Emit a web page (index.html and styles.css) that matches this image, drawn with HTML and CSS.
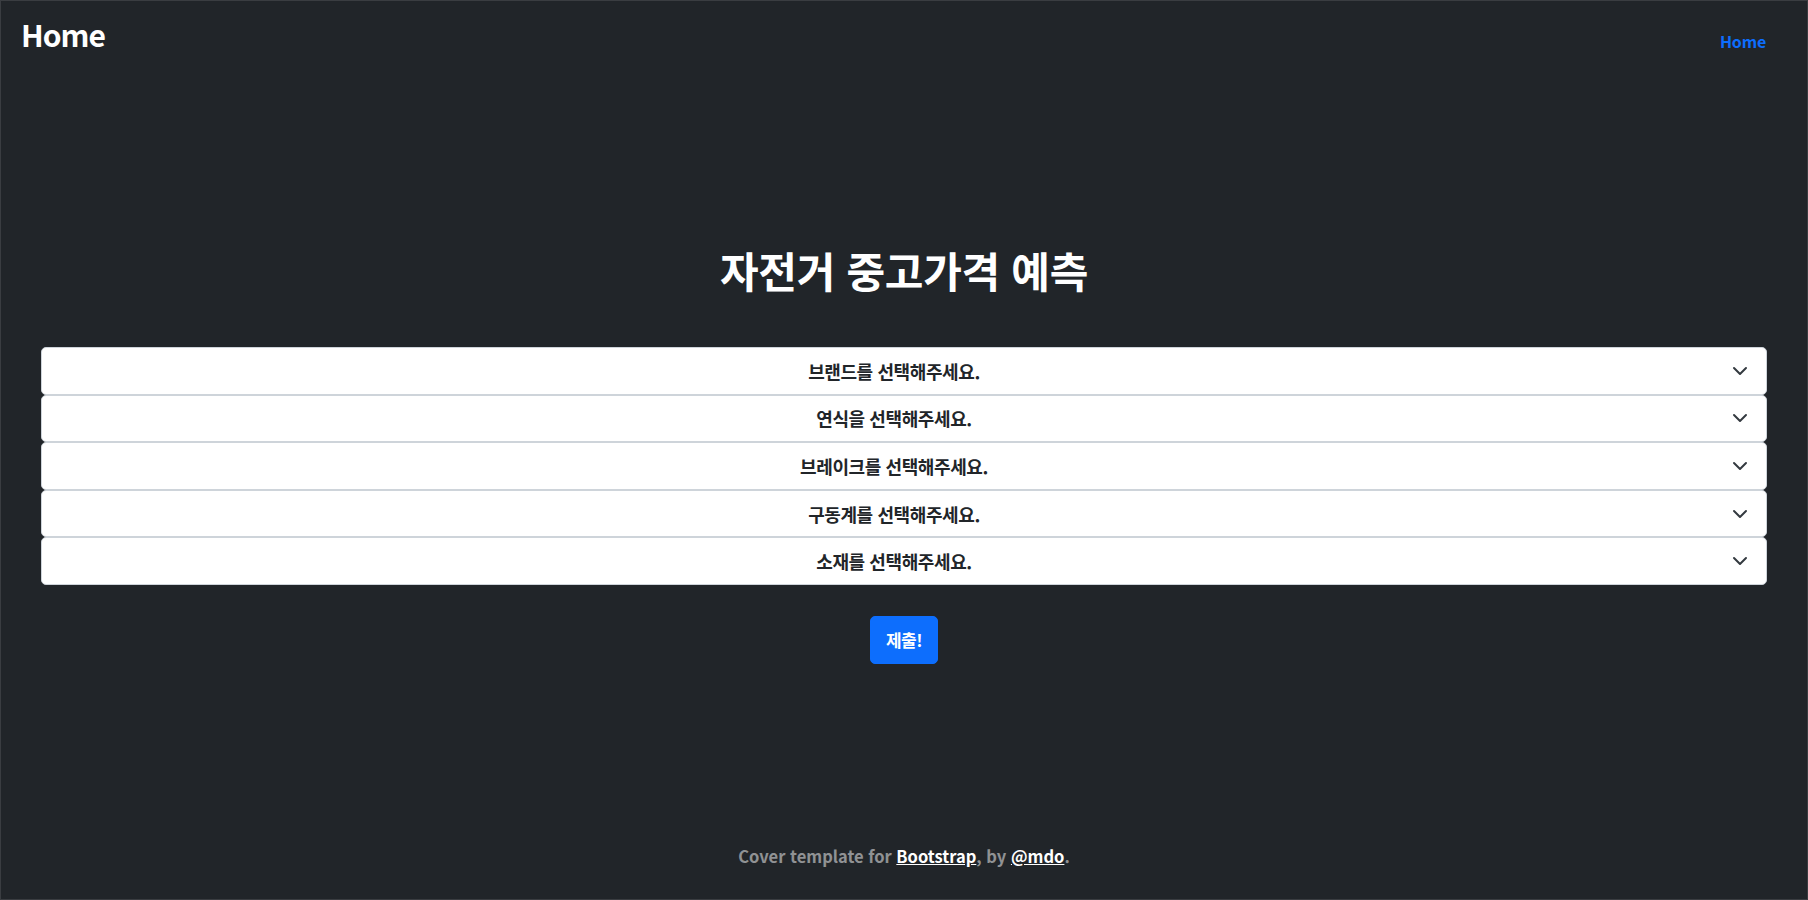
FILE: index.html
```html
<!DOCTYPE html>
<html lang="ko">
<head>
<meta charset="utf-8">
<title>자전거 중고가격 예측</title>
<link rel="stylesheet" href="styles.css">
</head>
<body>
<div class="cover">
  <header class="top">
    <h3 class="brand">Home</h3>
    <nav class="nav"><a class="nav-link" href="#">Home</a></nav>
  </header>
  <main class="main">
    <h1 class="title">자전거 중고가격 예측</h1>
    <form class="form">
      <div class="selects">
        <div class="select"><span>브랜드를 선택해주세요.</span><svg class="chev" viewBox="0 0 16 16"><path d="M2 5l6 6 6-6"/></svg></div>
        <div class="select"><span>연식을 선택해주세요.</span><svg class="chev" viewBox="0 0 16 16"><path d="M2 5l6 6 6-6"/></svg></div>
        <div class="select"><span>브레이크를 선택해주세요.</span><svg class="chev" viewBox="0 0 16 16"><path d="M2 5l6 6 6-6"/></svg></div>
        <div class="select"><span>구동계를 선택해주세요.</span><svg class="chev" viewBox="0 0 16 16"><path d="M2 5l6 6 6-6"/></svg></div>
        <div class="select"><span>소재를 선택해주세요.</span><svg class="chev" viewBox="0 0 16 16"><path d="M2 5l6 6 6-6"/></svg></div>
      </div>
      <div class="actions"><button class="btn" type="button">제출!</button></div>
    </form>
  </main>
  <footer class="foot">
    <p>Cover template for <a href="#">Bootstrap</a>, by <a href="#">@mdo</a>.</p>
  </footer>
</div>
</body>
</html>
```
FILE: styles.css
```css
html, body {
  margin: 0;
  height: 100%;
}
body {
  background: #212529;
  color: #fff;
  font-family: "Noto Sans CJK KR", "Noto Sans", sans-serif;
  font-weight: 700;
}
.cover {
  height: 100vh;
  box-sizing: border-box;
  display: flex;
  flex-direction: column;
  border: 1px solid #3a3d41;
}
.top {
  display: flex;
  justify-content: space-between;
  align-items: flex-start;
  padding: 13px 41px 0 20px;
}
.brand {
  margin: 0;
  font-size: 30px;
  line-height: 40px;
  font-weight: 700;
  letter-spacing: -1px;
}
.nav {
  margin-top: 14px;
}
.nav-link {
  color: #0d6efd;
  text-decoration: none;
  font-size: 16px;
  line-height: 26px;
  letter-spacing: -0.2px;
}
.main {
  flex: 1;
  display: flex;
  flex-direction: column;
  justify-content: center;
  padding: 13px 40px 0;
}
.title {
  margin: 0 0 53px;
  text-align: center;
  font-size: 42px;
  line-height: 48px;
  letter-spacing: -0.3px;
  font-weight: 700;
}
.form {
  margin: 0;
}
.selects {
  display: flex;
  flex-direction: column;
}
.select {
  position: relative;
  height: 47.6px;
  box-sizing: border-box;
  background: #fff;
  border: 1px solid #ced4da;
  border-radius: 5px;
  padding: 0 36px 0 16px;
  display: flex;
  align-items: center;
  justify-content: center;
  color: #212529;
  font-size: 18px;
  letter-spacing: -0.4px;
}
.select span {
  flex: 1;
  text-align: center;
}
.chev {
  position: absolute;
  right: 18px;
  top: 50%;
  width: 16px;
  height: 16px;
  margin-top: -8px;
  fill: none;
  stroke: #343a40;
  stroke-width: 2;
  stroke-linecap: round;
  stroke-linejoin: round;
}
.actions {
  display: flex;
  justify-content: center;
  margin-top: 31px;
}
.btn {
  background: #0d6efd;
  color: #fff;
  border: 1px solid #0d6efd;
  border-radius: 5px;
  height: 48px;
  padding: 0 15px;
  font-family: inherit;
  font-weight: 700;
  font-size: 17px;
  letter-spacing: -0.5px;
}
.foot {
  text-align: center;
  color: rgba(255, 255, 255, 0.5);
  padding-bottom: 30px;
}
.foot p {
  margin: 0;
  font-size: 16.5px;
  line-height: 26px;
}
.foot a {
  color: #fff;
  text-decoration: underline;
}
```
